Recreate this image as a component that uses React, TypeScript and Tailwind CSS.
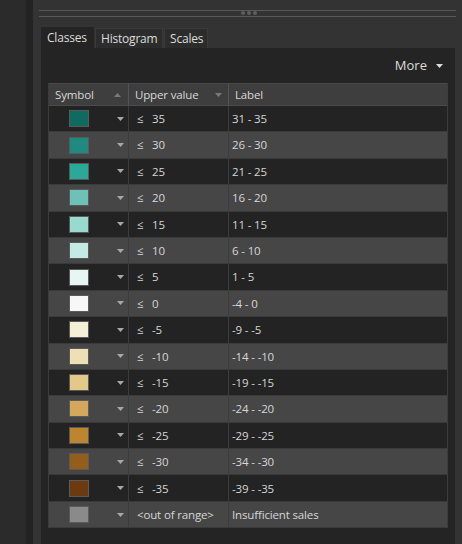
import React from "react";

const rows = [
  { c: "#0f6b5f", v: "35", l: "31 - 35" },
  { c: "#1f8a80", v: "30", l: "26 - 30" },
  { c: "#2aa89a", v: "25", l: "21 - 25" },
  { c: "#6cc2b7", v: "20", l: "16 - 20" },
  { c: "#98d9d0", v: "15", l: "11 - 15" },
  { c: "#c3ebe4", v: "10", l: "6 - 10" },
  { c: "#e7f6f3", v: "5", l: "1 - 5" },
  { c: "#f7f7f7", v: "0", l: "-4 - 0" },
  { c: "#f6efd8", v: "-5", l: "-9 - -5" },
  { c: "#ede0b4", v: "-10", l: "-14 - -10" },
  { c: "#e2c98a", v: "-15", l: "-19 - -15" },
  { c: "#d3a85a", v: "-20", l: "-24 - -20" },
  { c: "#bd8530", v: "-25", l: "-29 - -25" },
  { c: "#935e1a", v: "-30", l: "-34 - -30" },
  { c: "#6c3a10", v: "-35", l: "-39 - -35" },
];

function Caret({ cls }: { cls: string }) {
  return (
    <svg width="7" height="4" viewBox="0 0 7 4" className={cls}>
      <path d="M0 0 L7 0 L3.5 4 Z" fill="currentColor" />
    </svg>
  );
}

function CaretUp({ cls }: { cls: string }) {
  return (
    <svg width="7" height="4" viewBox="0 0 7 4" className={cls}>
      <path d="M0 4 L7 4 L3.5 0 Z" fill="currentColor" />
    </svg>
  );
}

function Row({ c, v, l, i, out }: { c: string; v?: string; l: string; i: number; out?: boolean }) {
  const bg = i % 2 === 0 ? "bg-[#232323]" : "bg-[#464646]";
  return (
    <div className={`grid grid-cols-[80px_100px_1fr] h-[26.4px] border-b border-[#3a3a3a] ${bg}`}>
      <div className="flex items-center border-r border-[#3c3c3c] pl-[20px]">
        <div className="w-[20px] h-[17px] border border-[#5a5a5a]" style={{ backgroundColor: c }} />
        <Caret cls="ml-[28px] text-[#a8a8a8]" />
      </div>
      <div className="flex items-center border-r border-[#3c3c3c] pl-[8px] text-[#d6d6d6]">
        {out ? (
          <span>&lt;out of range&gt;</span>
        ) : (
          <>
            <span className="w-[15px]">≤</span>
            <span>{v}</span>
          </>
        )}
      </div>
      <div className="flex items-center pl-[3px] text-[#d6d6d6]">{l}</div>
    </div>
  );
}

export default function App() {
  return (
    <div
      className="w-[462px] h-[544px] flex bg-[#333333] overflow-hidden"
      style={{ fontFamily: '"Open Sans", "Noto Sans", sans-serif' }}
    >
      <div className="w-[26px] bg-[#2b2b2b]" />
      <div className="w-[7px] bg-[#232323]" />
      <div className="flex-1 flex flex-col">
        <div className="pt-[10px] px-[6px]">
          <div className="relative">
            <div className="h-[1px] bg-[#595959]" />
            <div className="h-[5px]" />
            <div className="h-[1px] bg-[#595959]" />
            <div className="absolute left-[202px] top-[1px] flex gap-[2px]">
              <div className="w-[4px] h-[4px] rounded-full bg-[#5e5e5e]" />
              <div className="w-[4px] h-[4px] rounded-full bg-[#5e5e5e]" />
              <div className="w-[4px] h-[4px] rounded-full bg-[#5e5e5e]" />
            </div>
          </div>
        </div>
        <div className="flex-1 flex flex-col pl-[8px] pr-[7px] pt-[10px]">
          <div className="flex h-[21px] text-[12px] tracking-[-0.2px] leading-none">
            <div className="w-[53px] bg-[#242424] text-[#dcdcdc] flex items-center pl-[6px]">Classes</div>
            <div className="ml-[1px] w-[68px] bg-[#2c2c2c] border border-b-0 border-[#3a3a3a] text-[#dcdcdc] flex items-center pl-[5px] mt-[1px]">
              Histogram
            </div>
            <div className="ml-[1px] w-[44px] bg-[#2c2c2c] border border-b-0 border-[#3a3a3a] text-[#dcdcdc] flex items-center pl-[5px] mt-[1px]">
              Scales
            </div>
          </div>
          <div className="flex-1 bg-[#242424] px-[7px] flex flex-col">
            <div className="h-[35px] flex items-center justify-end pr-[5px] text-[13px] text-[#dcdcdc]">
              <span>More</span>
              <Caret cls="ml-[9px] text-[#dcdcdc]" />
            </div>
            <div className="border-x border-[#3c3c3c] text-[11.5px] tracking-[-0.15px]">
              <div className="grid grid-cols-[80px_100px_1fr] h-[23px] bg-[#3e3e3e] border-t border-b border-[#4a4a4a] text-[#d8d8d8]">
                <div className="flex items-center justify-between border-r border-[#545454] pl-[6px] pr-[7px]">
                  <span>Symbol</span>
                  <CaretUp cls="text-[#7a7a7a]" />
                </div>
                <div className="flex items-center justify-between border-r border-[#545454] pl-[6px] pr-[6px]">
                  <span>Upper value</span>
                  <Caret cls="text-[#7a7a7a]" />
                </div>
                <div className="flex items-center pl-[6px]">Label</div>
              </div>
              {rows.map((r, i) => (
                <Row key={i} c={r.c} v={r.v} l={r.l} i={i} />
              ))}
              <Row c="#8a8a8a" l="Insufficient sales" i={15} out />
            </div>
          </div>
        </div>
      </div>
    </div>
  );
}
